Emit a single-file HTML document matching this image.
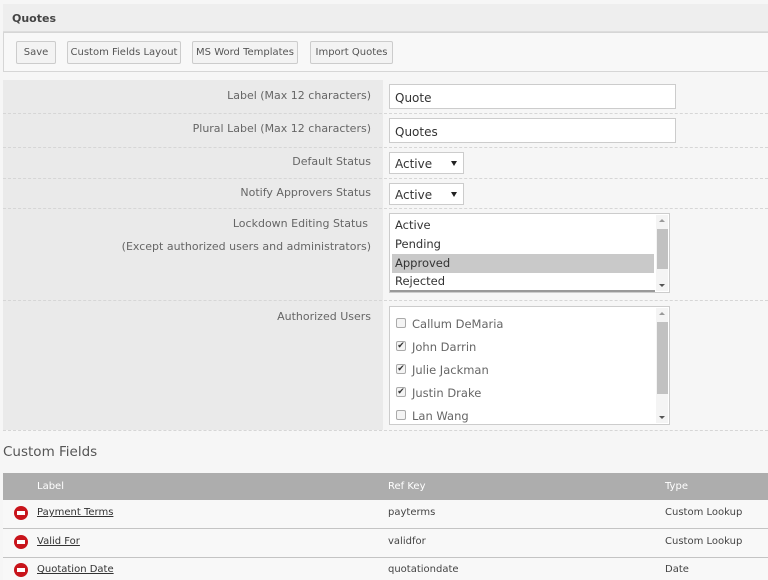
<!DOCTYPE html>
<html><head><style>
*{box-sizing:border-box;margin:0;padding:0}
body{width:768px;height:580px;overflow:hidden;background:#f6f6f6;font-family:"DejaVu Sans","Liberation Sans",sans-serif;color:#555;position:relative}
.a{position:absolute}
.btn{position:absolute;top:41px;height:23px;border:1px solid #ccc;background:#f3f3f3;font-size:10px;color:#555;line-height:22px;text-align:center;border-radius:2px}
.lbl{position:absolute;right:397px;font-size:11px;color:#666;white-space:nowrap}
.sep{position:absolute;left:3px;width:765px;border-top:1px dashed #d6d6d6}
.inp{position:absolute;left:389px;width:287px;height:25px;background:#fff;border:1px solid #ccc;font-size:12px;color:#333;padding:6px 5px}
.sel{position:absolute;left:389px;width:75px;height:22px;background:#fff;border:1px solid #ccc;font-size:12px;color:#333;padding:4px 5px}
.sel:after{content:"";position:absolute;right:6px;top:8px;border:3px solid transparent;border-top:5px solid #222}
.box{position:absolute;left:389px;width:281px;background:#fff;border:1px solid #ccc}
.opt{position:absolute;left:2px;width:262px;height:19px;font-size:11.5px;color:#333;padding:3px 3px;line-height:13px}
.sb{position:absolute;right:1px;top:1px;width:12px;bottom:1px;background:#f4f4f4}
.th{position:absolute;right:0;width:11px;background:#c1c1c1}
.up{position:absolute;left:3px;top:4px;border:3px solid transparent;border-bottom:3px solid #999;border-top:none}
.dn{position:absolute;left:3px;bottom:4px;border:3px solid transparent;border-top:3px solid #555;border-bottom:none}
.cb{position:absolute;left:6px;width:10px;height:10px;border:1px solid #aaa;background:#f4f4f4;border-radius:2px;font-size:9px;line-height:8px;color:#333;text-align:center}
.un{position:absolute;left:22px;font-size:11.5px;color:#666}
.row{position:absolute;left:3px;width:765px;border-top:1px solid #c4c4c4;font-size:10px;color:#444}
.ic{position:absolute;left:11px;width:14px;height:14px;border-radius:50%;background:#c8141b}
.ic:after{content:"";position:absolute;left:3px;top:5px;width:8px;height:4px;background:#fff}
</style></head><body>
<div class="a" style="left:3px;top:4px;width:765px;height:28px;background:#eee;border-bottom:1px solid #ddd"></div>
<div class="a" style="left:12px;top:12px;font-size:11px;font-weight:bold;color:#444">Quotes</div>
<div class="a" style="left:3px;top:32px;width:767px;height:40px;border:1px solid #d6d6d6;background:#f8f8f8"></div>
<div class="btn" style="left:16px;width:40px">Save</div>
<div class="btn" style="left:67px;width:114px">Custom Fields Layout</div>
<div class="btn" style="left:192px;width:106px">MS Word Templates</div>
<div class="btn" style="left:310px;width:83px">Import Quotes</div>

<div class="a" style="left:3px;top:80px;width:380px;height:350px;background:#eaeaea"></div>
<div class="sep" style="top:113px"></div><div class="sep" style="top:147px"></div><div class="sep" style="top:178px"></div><div class="sep" style="top:208px"></div><div class="sep" style="top:300px"></div><div class="sep" style="top:430px"></div>

<div class="lbl" style="top:89px">Label (Max 12 characters)</div>
<div class="inp" style="top:84px">Quote</div>
<div class="lbl" style="top:122px">Plural Label (Max 12 characters)</div>
<div class="inp" style="top:118px">Quotes</div>
<div class="lbl" style="top:155px">Default Status</div>
<div class="sel" style="top:152px">Active</div>
<div class="lbl" style="top:186px">Notify Approvers Status</div>
<div class="sel" style="top:183px">Active</div>
<div class="lbl" style="top:217px;right:400px">Lockdown Editing Status</div>
<div class="lbl" style="top:240px">(Except authorized users and administrators)</div>
<div class="box" style="top:213px;height:80px">
<div class="opt" style="top:2px">Active</div>
<div class="opt" style="top:21px">Pending</div>
<div class="opt" style="top:40px;background:#c9c9c9">Approved</div>
<div class="opt" style="top:58px">Rejected</div>
<div class="a" style="left:0;top:76px;width:265px;height:2px;background:#999"></div>
<div class="sb"><div class="up"></div><div class="th" style="top:14px;height:40px"></div><div class="dn"></div></div>
</div>
<div class="lbl" style="top:310px">Authorized Users</div>
<div class="box" style="top:306px;height:119px">
<div class="cb" style="top:11px"></div><div class="un" style="top:10px">Callum DeMaria</div>
<div class="cb" style="top:34px">✔</div><div class="un" style="top:33px">John Darrin</div>
<div class="cb" style="top:57px">✔</div><div class="un" style="top:56px">Julie Jackman</div>
<div class="cb" style="top:80px">✔</div><div class="un" style="top:79px">Justin Drake</div>
<div class="cb" style="top:103px"></div><div class="un" style="top:102px">Lan Wang</div>
<div class="sb"><div class="up"></div><div class="th" style="top:14px;height:72px"></div><div class="dn"></div></div>
</div>

<div class="a" style="left:3px;top:444px;font-size:13.5px;color:#555">Custom Fields</div>
<div class="a" style="left:3px;top:473px;width:765px;height:27px;background:#adadad"></div>
<div class="a" style="left:37px;top:481px;font-size:10px;color:#fff">Label</div>
<div class="a" style="left:388px;top:481px;font-size:10px;color:#fff">Ref Key</div>
<div class="a" style="left:665px;top:481px;font-size:10px;color:#fff">Type</div>
<div class="a" style="left:3px;top:500px;width:765px;height:80px;background:#f8f8f8"></div>
<div class="row" style="top:500px;height:28px;border-top:none"><div class="ic" style="top:6px"></div><span class="a" style="left:34px;top:7px;text-decoration:underline;color:#333">Payment Terms</span><span class="a" style="left:385px;top:7px">payterms</span><span class="a" style="left:662px;top:7px">Custom Lookup</span></div>
<div class="row" style="top:528px;height:29px"><div class="ic" style="top:6px"></div><span class="a" style="left:34px;top:7px;text-decoration:underline;color:#333">Valid For</span><span class="a" style="left:385px;top:7px">validfor</span><span class="a" style="left:662px;top:7px">Custom Lookup</span></div>
<div class="row" style="top:557px;height:23px"><div class="ic" style="top:5px"></div><span class="a" style="left:34px;top:6px;text-decoration:underline;color:#333">Quotation Date</span><span class="a" style="left:385px;top:6px">quotationdate</span><span class="a" style="left:662px;top:6px">Date</span></div>
</body></html>
